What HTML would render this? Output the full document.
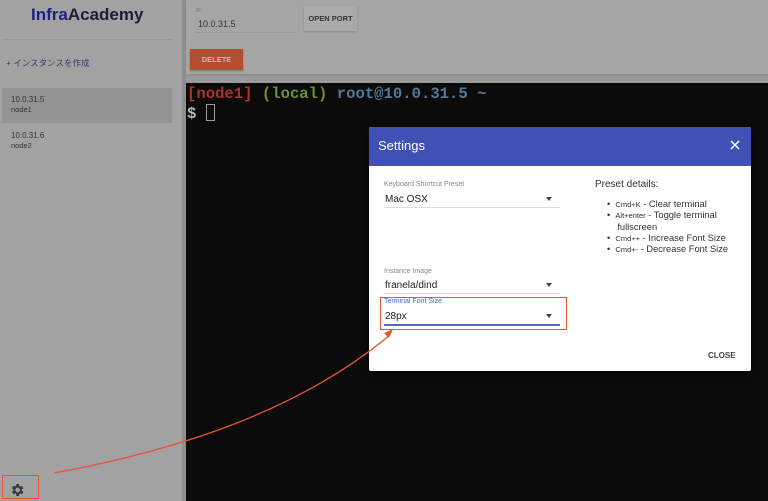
<!DOCTYPE html>
<html><head><meta charset="utf-8"><style>
*{margin:0;padding:0;box-sizing:border-box}
body{width:768px;height:501px;overflow:hidden;background:#9a9a9a;font-family:"Liberation Sans","Noto Sans CJK JP",sans-serif;position:relative}
.abs{position:absolute}
</style></head><body>
<div class="abs" style="left:0;top:0;width:182px;height:501px;background:#a2a2a2"></div>
<div class="abs" style="left:182px;top:0;width:4px;height:501px;background:#8e8e8e"></div>
<div class="abs" style="left:31px;top:5px;font-size:17px;font-weight:bold;color:#1e1e33"><span style="color:#1f1f8a">Infra</span>Academy</div>
<div class="abs" style="left:2px;top:39px;width:170px;height:1px;background:#959595"></div>
<div class="abs" style="left:6px;top:57px;font-size:8.5px;color:#3a3a6a">+ インスタンスを作成</div>
<div class="abs" style="left:2px;top:88px;width:170px;height:35px;background:#939393"></div>
<div class="abs" style="left:11px;top:95px;font-size:8px;color:#333;line-height:10px">10.0.31.5<br><span style="font-size:7.5px">node1</span></div>
<div class="abs" style="left:11px;top:131px;font-size:8px;color:#333;line-height:10px">10.0.31.6<br><span style="font-size:7.5px">node2</span></div>
<svg class="abs" style="left:9px;top:482px" width="16" height="16" viewBox="0 0 24 24"><path fill="#3a3a3a" d="M19.4 13a7.5 7.5 0 000-2l2.1-1.6-2-3.5-2.5 1a7.6 7.6 0 00-1.700-1L15 3h-4l-.4 2.7a7.6 7.6 0 00-1.7 1l-2.5-1-2 3.5L6.6 11a7.5 7.5 0 000 2l-2.1 1.6 2 3.5 2.5-1a7.6 7.6 0 001.7 1L11 21h4l.4-2.7a7.6 7.6 0 001.7-1l2.5 1 2-3.5zM13 15.5A3.5 3.5 0 1113 8.5a3.5 3.5 0 010 7z"/></svg>
<div class="abs" style="left:2px;top:475px;width:37px;height:24px;border:1.5px solid #e8533a"></div>
<div class="abs" style="left:186px;top:0;width:582px;height:74px;background:#a6a6a6;box-shadow:0 1px 2px #888"></div>
<div class="abs" style="left:196px;top:8px;font-size:5px;color:#777">IP</div>
<div class="abs" style="left:198px;top:19px;font-size:9px;color:#333">10.0.31.5</div>
<div class="abs" style="left:195px;top:32px;width:100px;height:1px;background:#999"></div>
<div class="abs" style="left:304px;top:6px;width:53px;height:25px;background:#aaa;box-shadow:0 1px 2px #888;font-size:7.5px;font-weight:bold;color:#333;text-align:center;line-height:25px">OPEN PORT</div>
<div class="abs" style="left:190px;top:49px;width:53px;height:21px;background:#b14f33;box-shadow:0 1px 2px #777;font-size:7.5px;font-weight:bold;color:#d9b4a8;text-align:center;line-height:21px">DELETE</div>
<div class="abs" style="left:186px;top:83px;width:582px;height:418px;background:#0b0b0b"></div>
<div class="abs" style="left:187px;top:85px;font-family:'Liberation Mono',monospace;font-weight:bold;font-size:15.6px;line-height:19px;white-space:pre;color:#bbb"><span style="color:#a8352a">[node1]</span> <span style="color:#6a9030">(local)</span> <span style="color:#56789a">root@10.0.31.5 ~</span>
$ <span style="display:inline-block;width:9px;height:17px;border:1px solid #999;vertical-align:-3px"></span></div>
<div class="abs" style="left:369px;top:127px;width:382px;height:244px;background:#fff;border-radius:2px;box-shadow:0 2px 8px rgba(0,0,0,.5)"></div>
<div class="abs" style="left:369px;top:127px;width:382px;height:39px;background:#3f51b5;border-radius:2px 2px 0 0"></div>
<div class="abs" style="left:378px;top:138px;font-size:13px;color:#fff">Settings</div>
<svg class="abs" style="left:730px;top:140px" width="10" height="10"><path d="M1 1L9 9M9 1L1 9" stroke="#fff" stroke-width="1.5"/></svg>
<div class="abs" style="left:384px;top:181px;font-size:7px;color:#888">Keyboard Shortcut Preset</div>
<div class="abs" style="left:385px;top:194px;font-size:10px;color:#222">Mac OSX</div>
<div class="abs" style="left:546px;top:197px;border:3.5px solid transparent;border-top:4px solid #444"></div>
<div class="abs" style="left:384px;top:207px;width:176px;height:1px;background:#ddd"></div>
<div class="abs" style="left:384px;top:268px;font-size:7px;color:#888">Instance Image</div>
<div class="abs" style="left:385px;top:280px;font-size:10px;color:#222">franela/dind</div>
<div class="abs" style="left:546px;top:283px;border:3.5px solid transparent;border-top:4px solid #444"></div>
<div class="abs" style="left:384px;top:293px;width:176px;height:1px;background:#ddd"></div>
<div class="abs" style="left:384px;top:298px;font-size:7px;color:#4f60c8">Terminal Font Size</div>
<div class="abs" style="left:385px;top:311px;font-size:10px;color:#222">28px</div>
<div class="abs" style="left:546px;top:314px;border:3.5px solid transparent;border-top:4px solid #444"></div>
<div class="abs" style="left:384px;top:324px;width:176px;height:1.5px;background:#5565c4"></div>
<div class="abs" style="left:380px;top:297px;width:187px;height:33px;border:1.5px solid #e8533a"></div>
<div class="abs" style="left:595px;top:179px;font-size:10px;color:#333">Preset details:</div>
<div class="abs" style="left:607px;top:199px;font-size:9.3px;color:#333;line-height:11.3px">
•&nbsp; <span style="font-size:7.5px">Cmd+K</span> - Clear terminal<br>
•&nbsp; <span style="font-size:7.5px">Alt+enter</span> - Toggle terminal<br>&nbsp;&nbsp;&nbsp;&nbsp;fullscreen<br>
•&nbsp; <span style="font-size:7.5px">Cmd++</span> - Increase Font Size<br>
•&nbsp; <span style="font-size:7.5px">Cmd+-</span> - Decrease Font Size</div>
<div class="abs" style="left:708px;top:351px;font-size:8px;font-weight:bold;color:#444">CLOSE</div>
<svg class="abs" style="left:0;top:0" width="768" height="501"><path d="M54 473 C180 450 300 410 390 335" fill="none" stroke="#e8533a" stroke-width="1.3"/><path d="M393 329 L384 333 L389 338Z" fill="#e8533a"/></svg>
</body></html>
